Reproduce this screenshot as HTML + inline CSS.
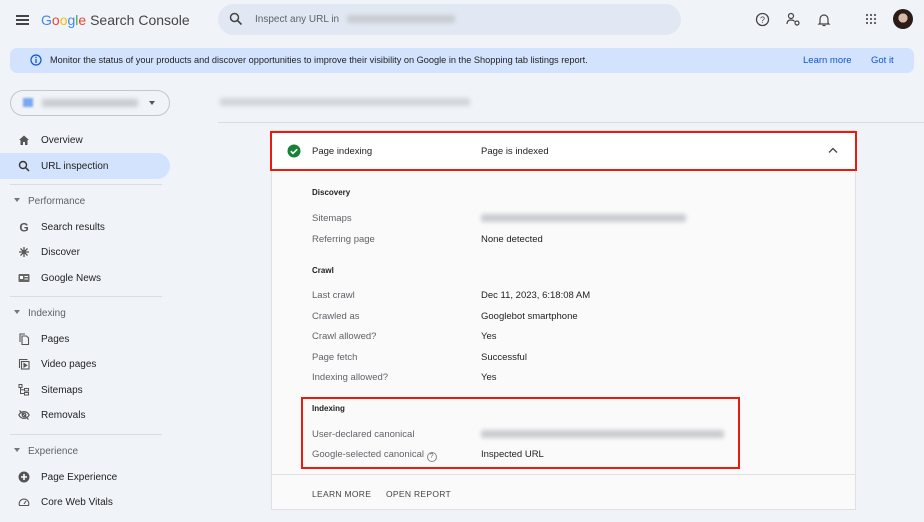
<!DOCTYPE html>
<html><head><style>
*{box-sizing:border-box;margin:0;padding:0}
body{width:924px;height:522px;overflow:hidden;background:#f0f4f9;font-family:"Liberation Sans",Arial,sans-serif;color:#1f1f1f;position:relative;font-size:13px}
.a{position:absolute}
.blur{background:#c9ccd1;filter:blur(2px);height:8px;border-radius:2px}
.nav{position:absolute;left:0;width:170px;height:26px;font-size:10px;color:#1f1f1f;display:flex;align-items:center}
.nav .ic{position:absolute;left:18px;top:7px;width:12px;height:12px}
.nav span{position:absolute;left:41px}
.sec{position:absolute;left:14px;font-size:10px;color:#5f6368}
.sec:before{content:"";display:inline-block;border:3px solid transparent;border-top:4px solid #777;margin-right:8px;vertical-align:-1px}
.hr{position:absolute;left:10px;width:152px;height:1px;background:#dadce0}
.lab{position:absolute;left:312px;font-size:9.5px;color:#5f6368}
.val{position:absolute;left:481px;font-size:9.5px;color:#1f1f1f}
.h{position:absolute;left:312px;font-size:8px;font-weight:bold;color:#1f1f1f}
</style></head><body>
<div class="a" style="left:16px;top:15px;width:13px;height:2px;background:#444;box-shadow:0 4px 0 #444,0 8px 0 #444"></div>
<div class="a" style="left:41px;top:12px;font-size:14px;"><span style="color:#4285f4">G</span><span style="color:#ea4335">o</span><span style="color:#fbbc05">o</span><span style="color:#4285f4">g</span><span style="color:#34a853">l</span><span style="color:#ea4335">e</span> <span style="color:#444">Search Console</span></div>
<div class="a" style="left:218px;top:4px;width:463px;height:31px;border-radius:16px;background:#e1e8f3"></div>
<svg class="a" style="left:229px;top:12px" width="14" height="14" viewBox="0 0 14 14"><circle cx="5.5" cy="5.5" r="4" fill="none" stroke="#444" stroke-width="1.5"/><path d="M8.5 8.5l4 4" stroke="#444" stroke-width="1.6"/></svg>
<div class="a" style="left:255px;top:14px;font-size:10px;color:#5f6368">Inspect any URL in</div>
<div class="a blur" style="left:347px;top:15px;width:108px"></div>
<svg class="a" style="left:755px;top:12px" width="15" height="15"><circle cx="7.5" cy="7.5" r="6" fill="none" stroke="#444" stroke-width="1.3"/><text x="7.5" y="11" font-size="9" text-anchor="middle" fill="#444" font-family="Liberation Sans">?</text></svg>
<svg class="a" style="left:786px;top:12px" width="15" height="15"><circle cx="5" cy="4" r="2.5" fill="none" stroke="#444" stroke-width="1.2"/><path d="M1 12c0-3 2-4 4-4s3 .5 3.5 1.5" fill="none" stroke="#444" stroke-width="1.2"/><circle cx="11" cy="11" r="2" fill="none" stroke="#444" stroke-width="1.2"/></svg>
<svg class="a" style="left:817px;top:12px" width="14" height="15"><path d="M3 11V7a4 4 0 018 0v4l1 1H2z" fill="none" stroke="#444" stroke-width="1.2"/><path d="M5.5 13.5h3" stroke="#444" stroke-width="1.2"/></svg>
<svg class="a" style="left:865px;top:13px" width="12" height="12" fill="#555"><circle cx="2" cy="2" r="1.1"/><circle cx="6" cy="2" r="1.1"/><circle cx="10" cy="2" r="1.1"/><circle cx="2" cy="6" r="1.1"/><circle cx="6" cy="6" r="1.1"/><circle cx="10" cy="6" r="1.1"/><circle cx="2" cy="10" r="1.1"/><circle cx="6" cy="10" r="1.1"/><circle cx="10" cy="10" r="1.1"/></svg>
<div class="a" style="left:893px;top:9px;width:20px;height:20px;border-radius:50%;background:radial-gradient(circle at 50% 45%,#d9b9a5 0 30%,#2a1d18 32%)"></div>
<div class="a" style="left:10px;top:48px;width:904px;height:25px;border-radius:7px;background:#d3e3fd"></div>
<svg class="a" style="left:30px;top:54px" width="12" height="12"><circle cx="6" cy="6" r="5" fill="none" stroke="#0b57d0" stroke-width="1.2"/><path d="M6 5v4" stroke="#0b57d0" stroke-width="1.3"/><circle cx="6" cy="3.4" r=".8" fill="#0b57d0"/></svg>
<div class="a" style="left:50px;top:55px;font-size:9.2px;color:#1f1f1f">Monitor the status of your products and discover opportunities to improve their visibility on Google in the Shopping tab listings report.</div>
<div class="a" style="left:803px;top:55px;font-size:9.5px;color:#0b57d0">Learn more</div>
<div class="a" style="left:871px;top:55px;font-size:9.5px;color:#0b57d0">Got it</div>
<div class="a" style="left:10px;top:90px;width:160px;height:26px;border:1px solid #c4c7c5;border-radius:13px"></div>
<div class="a" style="left:23px;top:98px;width:10px;height:9px;background:#7aa8f0;filter:blur(1px)"></div>
<div class="a blur" style="left:42px;top:99px;width:96px"></div>
<div class="a" style="left:149px;top:101px;border:3px solid transparent;border-top:4px solid #555"></div>
<div class="a" style="left:0;top:153px;width:170px;height:26px;background:#d3e3fd;border-radius:0 13px 13px 0"></div>
<div class="nav" style="top:127px"><svg class="ic" viewBox="0 0 12 12"><path d="M1 6L6 1.5 11 6H9.5v5h-2.5V8H5v3H2.5V6z" fill="#555"/></svg><span>Overview</span></div>
<div class="nav" style="top:153px"><svg class="ic" viewBox="0 0 12 12"><circle cx="5" cy="5" r="3.5" fill="none" stroke="#333" stroke-width="1.4"/><path d="M7.5 7.5l3.5 3.5" stroke="#333" stroke-width="1.5"/></svg><span>URL inspection</span></div>
<div class="hr" style="top:184px"></div>
<div class="sec" style="top:196px">Performance</div>
<div class="nav" style="top:214px"><svg class="ic" viewBox="0 0 12 12"><text x="6" y="10.5" font-size="12" font-weight="bold" text-anchor="middle" fill="#555" font-family="Liberation Sans">G</text></svg><span>Search results</span></div>
<div class="nav" style="top:239px"><svg class="ic" viewBox="0 0 12 12" stroke="#555" stroke-width="1.3"><path d="M6 1v10M1 6h10M2.5 2.5l7 7M9.5 2.5l-7 7"/></svg><span>Discover</span></div>
<div class="nav" style="top:265px"><svg class="ic" viewBox="0 0 12 12"><rect x="0.5" y="2" width="11" height="8" rx="1" fill="#666"/><rect x="2" y="4" width="3" height="3" fill="#fff"/><path d="M6.5 4.5h3.5M6.5 7h3.5" stroke="#fff"/></svg><span>Google News</span></div>
<div class="hr" style="top:296px"></div>
<div class="sec" style="top:308px">Indexing</div>
<div class="nav" style="top:326px"><svg class="ic" viewBox="0 0 12 12" fill="none" stroke="#555" stroke-width="1.1"><path d="M2 9V1h5"/><path d="M4 3h4.5l2 2v6.5H4z"/></svg><span>Pages</span></div>
<div class="nav" style="top:351px"><svg class="ic" viewBox="0 0 12 12" fill="none" stroke="#555" stroke-width="1.1"><path d="M1.5 10V1.5h8"/><rect x="3.5" y="3.5" width="7.5" height="7.5"/><path d="M6 5.5v3.5l2.7-1.7z" fill="#555"/></svg><span>Video pages</span></div>
<div class="nav" style="top:377px"><svg class="ic" viewBox="0 0 12 12" fill="none" stroke="#555" stroke-width="1"><rect x="1" y="0.5" width="3" height="3"/><rect x="6.5" y="4.5" width="4" height="2.5"/><rect x="6.5" y="8.5" width="4" height="2.5"/><path d="M2.5 3.5v6h4M2.5 5.8h4"/></svg><span>Sitemaps</span></div>
<div class="nav" style="top:402px"><svg class="ic" viewBox="0 0 12 12" fill="none" stroke="#555" stroke-width="1.2"><path d="M0.8 6c2.5-4.5 7.9-4.5 10.4 0-2.5 4.5-7.9 4.5-10.4 0z"/><circle cx="6" cy="6" r="1.8"/><path d="M1.5 1.5l9 9"/></svg><span>Removals</span></div>
<div class="hr" style="top:434px"></div>
<div class="sec" style="top:446px">Experience</div>
<div class="nav" style="top:464px"><svg class="ic" viewBox="0 0 12 12"><circle cx="6" cy="6" r="5.5" fill="#555"/><path d="M6 3v6M3 6h6" stroke="#fff" stroke-width="1.6"/></svg><span>Page Experience</span></div>
<div class="nav" style="top:489px"><svg class="ic" viewBox="0 0 12 12" fill="none" stroke="#555" stroke-width="1.1"><path d="M1.5 9.5a4.8 4.8 0 119 0z"/><path d="M6 8l2-3"/></svg><span>Core Web Vitals</span></div>
<div class="a blur" style="left:220px;top:98px;width:250px;background:#d2d5da"></div>
<div class="a" style="left:218px;top:122px;width:706px;height:1px;background:#dadce0"></div>
<div class="a" style="left:271px;top:130px;width:585px;height:380px;background:#fafafa;border:1px solid #e0e0e0"></div>
<div class="a" style="left:270px;top:131px;width:587px;height:40px;background:#fff;border:2px solid #ea1b0c"></div>
<svg class="a" style="left:287px;top:144px" width="14" height="14"><circle cx="7" cy="7" r="6.5" fill="#188038"/><path d="M3.8 7.2l2.2 2.2 4.2-4.2" fill="none" stroke="#fff" stroke-width="1.6"/></svg>
<div class="a" style="left:312px;top:146px;font-size:9.5px">Page indexing</div>
<div class="a" style="left:481px;top:146px;font-size:9.5px">Page is indexed</div>
<svg class="a" style="left:828px;top:147px" width="10" height="7"><path d="M1 5.5l4-4 4 4" fill="none" stroke="#444" stroke-width="1.3"/></svg>
<div class="h" style="top:188px">Discovery</div>
<div class="lab" style="top:213px">Sitemaps</div><div class="a blur" style="left:481px;top:214px;width:205px"></div>
<div class="lab" style="top:234px">Referring page</div><div class="val" style="top:234px">None detected</div>
<div class="h" style="top:266px">Crawl</div>
<div class="lab" style="top:290px">Last crawl</div><div class="val" style="top:290px">Dec 11, 2023, 6:18:08 AM</div>
<div class="lab" style="top:311px">Crawled as</div><div class="val" style="top:311px">Googlebot smartphone</div>
<div class="lab" style="top:331px">Crawl allowed?</div><div class="val" style="top:331px">Yes</div>
<div class="lab" style="top:352px">Page fetch</div><div class="val" style="top:352px">Successful</div>
<div class="lab" style="top:372px">Indexing allowed?</div><div class="val" style="top:372px">Yes</div>
<div class="a" style="left:301px;top:397px;width:439px;height:72px;border:2px solid #ea1b0c"></div>
<div class="h" style="top:404px">Indexing</div>
<div class="lab" style="top:429px">User-declared canonical</div><div class="a blur" style="left:481px;top:430px;width:243px"></div>
<div class="lab" style="top:449px">Google-selected canonical <span style="display:inline-block;width:10px;height:10px;border:1px solid #888;border-radius:50%;font-size:7px;text-align:center;line-height:8px;vertical-align:-1px">?</span></div><div class="val" style="top:449px">Inspected URL</div>
<div class="a" style="left:272px;top:474px;width:583px;height:1px;background:#e0e0e0"></div>
<div class="a" style="left:312px;top:489px;font-size:8.5px;color:#444;letter-spacing:.3px">LEARN MORE</div>
<div class="a" style="left:386px;top:489px;font-size:8.5px;color:#444;letter-spacing:.3px">OPEN REPORT</div>
</body></html>
